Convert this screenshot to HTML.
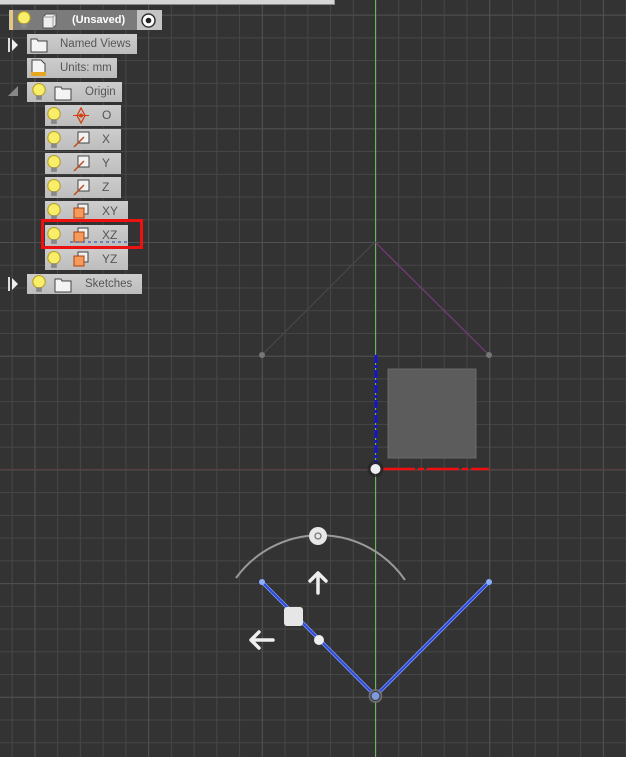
<!DOCTYPE html>
<html><head><meta charset="utf-8"><style>
body{margin:0;width:626px;height:757px;overflow:hidden;background:#333;font-family:"Liberation Sans",sans-serif;position:relative}
svg.bg{position:absolute;left:0;top:0}
.it{position:absolute;height:21px;background:linear-gradient(#cdcdcd,#bdbdbd);font-size:11.5px;color:#555;line-height:21px}
.it .t{position:absolute;top:0}
.bulb{position:absolute;top:2px;width:18px;height:18px}
.ic{position:absolute;top:2px;width:18px;height:17px}
.exp{position:absolute}
</style></head><body>
<svg class="bg" width="626" height="757" xmlns="http://www.w3.org/2000/svg">
<defs>
<pattern id="g" x="11.66" y="14.6" width="22.74" height="22.74" patternUnits="userSpaceOnUse">
<path d="M0.5 0V22.74M0 0.5H22.74" stroke="#464646" stroke-width="1"/>
</pattern>
<pattern id="G" x="34.4" y="14.6" width="113.7" height="113.7" patternUnits="userSpaceOnUse">
<path d="M0.5 0V113.7M0 0.5H113.7" stroke="#505050" stroke-width="1"/>
</pattern>
</defs>
<rect width="626" height="757" fill="#333"/>
<rect width="626" height="757" fill="url(#g)"/>
<rect width="626" height="757" fill="url(#G)"/>
<line x1="0" y1="469.5" x2="626" y2="469.5" stroke="#5a4040" stroke-width="1"/>
<line x1="375.5" y1="0" x2="375.5" y2="757" stroke="#66bb55" stroke-width="1"/>
<line x1="375" y1="242" x2="262" y2="355" stroke="#4a4a4a" stroke-width="1"/>
<line x1="375" y1="242" x2="489" y2="355" stroke="#7b3a7d" stroke-width="1.2"/>
<circle cx="262" cy="355" r="3" fill="#777"/>
<circle cx="489" cy="355" r="3" fill="#777"/>
<rect x="388" y="369" width="88" height="89" fill="#5c5c5c" stroke="#6a6a6a"/>
<line x1="376" y1="355" x2="376" y2="465" stroke="#1010ee" stroke-width="2.5" stroke-dasharray="8,2,3,2"/>
<line x1="383" y1="469" x2="489" y2="469" stroke="#ee1010" stroke-width="2.5" stroke-dasharray="32,3,6,3"/>
<circle cx="375.5" cy="469" r="8" fill="#222" opacity=".7"/>
<circle cx="375.5" cy="469" r="5" fill="#eee"/>
<path d="M236 578 A103.5 103.5 0 0 1 405 580" fill="none" stroke="#9a9a9a" stroke-width="2"/>
<path d="M262 582L375.5 696L489 582" fill="none" stroke="#8aa0ff" stroke-width="3.5"/>
<path d="M262 582L375.5 696L489 582" fill="none" stroke="#2a4ad8" stroke-width="2"/>
<circle cx="262" cy="582" r="3" fill="#8ab0ff"/>
<circle cx="489" cy="582" r="3" fill="#8ab0ff"/>
<circle cx="375.5" cy="696" r="7" fill="#777" opacity=".8"/>
<circle cx="375.5" cy="696" r="4.5" fill="#7d9ae0" stroke="#333" stroke-width="1"/>
<circle cx="318" cy="536" r="9" fill="#e8e8e8"/>
<circle cx="318" cy="536" r="3" fill="none" stroke="#777" stroke-width="1.3"/>
<path d="M318 593V573M310 581L318 573L326 581" fill="none" stroke="#eee" stroke-width="3.5" stroke-linecap="round" stroke-linejoin="round"/>
<path d="M273 640H251M259 632L251 640L259 648" fill="none" stroke="#eee" stroke-width="3.5" stroke-linecap="round" stroke-linejoin="round"/>
<rect x="284" y="607" width="19" height="19" rx="3" fill="#e6e6e6"/>
<circle cx="319" cy="640" r="5" fill="#eee"/>
</svg>

<div style="position:absolute;left:0;top:0;width:334px;height:4px;background:#d6d6d6;border-right:1px solid #999;border-bottom:1px solid #888"></div>

<svg width="0" height="0" style="position:absolute"><defs>
<g id="bulb"><circle cx="8" cy="6" r="5.5" fill="#f8ee6a" stroke="#b8a020" stroke-width="1"/><rect x="5.5" y="11" width="5" height="4" fill="#888"/></g>
<g id="fold"><path d="M1 3H7L8 5H17V16H1Z" fill="#f4f4f4" stroke="#444"/></g>
<g id="ax"><rect x="6" y="1" width="11" height="11" fill="#f2f2f2" stroke="#444"/><line x1="2" y1="16" x2="12" y2="6" stroke="#c04a20" stroke-width="1.5"/></g>
<g id="pl"><rect x="6" y="1" width="10" height="10" fill="#f0f0f0" stroke="#444"/><rect x="2" y="5" width="10" height="10" fill="#f59a5a" stroke="#b04010"/></g>
</defs></svg>

<div class="it" style="left:9px;top:10px;width:153px;height:20px;background:#c4c4c4">
 <div style="position:absolute;left:1px;top:0;width:3px;height:20px;background:#e8c878"></div>
 <div style="position:absolute;left:4px;top:0;width:124px;height:20px;background:#7b7b7b"></div>
 <svg class="bulb" style="left:6px;top:1px" viewBox="0 0 16 16"><use href="#bulb"/></svg>
 <svg style="position:absolute;left:32px;top:2px" width="17" height="17"><path d="M2 5L5 2H15V13L12 16H2Z" fill="#eee" stroke="#555"/><path d="M2 5H12V16M12 5L15 2" fill="none" stroke="#999"/></svg>
 <span class="t" style="left:63px;color:#fff;font-weight:bold;font-size:11px;line-height:20px">(Unsaved)</span>
 <svg style="position:absolute;left:132px;top:3px" width="15" height="15"><circle cx="7.5" cy="7.5" r="6.5" fill="#fff" stroke="#333" stroke-width="1.5"/><circle cx="7.5" cy="7.5" r="2.8" fill="#222"/></svg>
</div>

<svg class="exp" style="left:8px;top:38px" width="10" height="14"><rect x="0" y="0" width="2" height="14" fill="#ddd"/><path d="M4 1L10 7L4 13Z" fill="#eee"/></svg>
<div class="it" style="left:27px;top:34px;width:110px;height:20px"><svg class="ic" style="left:3px" viewBox="0 0 18 17"><use href="#fold"/></svg><span class="t" style="left:33px;line-height:20px">Named Views</span></div>

<div class="it" style="left:27px;top:58px;width:90px;height:20px"><svg class="ic" style="left:3px;top:1px" viewBox="0 0 18 17"><path d="M2 1H11L15 5V14H2Z" fill="#f4f4f4" stroke="#444"/><rect x="1" y="13" width="15" height="4" fill="#e8a520"/></svg><span class="t" style="left:33px;line-height:20px">Units: mm</span></div>

<svg class="exp" style="left:8px;top:86px" width="11" height="11"><path d="M10 0V10H0Z" fill="#888"/></svg>
<div class="it" style="left:27px;top:82px;width:95px;height:20px"><svg class="bulb" style="left:3px;top:1px" viewBox="0 0 16 16"><use href="#bulb"/></svg><svg class="ic" style="left:27px" viewBox="0 0 18 17"><use href="#fold"/></svg><span class="t" style="left:58px;line-height:20px">Origin</span></div>

<div class="it" style="left:45px;top:105px;width:76px"><svg class="bulb" viewBox="0 0 16 16"><use href="#bulb"/></svg><svg class="ic" style="left:27px" viewBox="0 0 18 17"><path d="M9 1L13 8.5L9 16L5 8.5Z" fill="none" stroke="#d04010" stroke-width="1.3"/><path d="M1 8.5H17" stroke="#d04010"/><circle cx="9" cy="8.5" r="2" fill="#d04010"/></svg><span class="t" style="left:57px;font-size:12px">O</span></div>
<div class="it" style="left:45px;top:129px;width:76px"><svg class="bulb" viewBox="0 0 16 16"><use href="#bulb"/></svg><svg class="ic" style="left:27px" viewBox="0 0 18 17"><use href="#ax"/></svg><span class="t" style="left:57px;font-size:12px">X</span></div>
<div class="it" style="left:45px;top:153px;width:76px"><svg class="bulb" viewBox="0 0 16 16"><use href="#bulb"/></svg><svg class="ic" style="left:27px" viewBox="0 0 18 17"><use href="#ax"/></svg><span class="t" style="left:57px;font-size:12px">Y</span></div>
<div class="it" style="left:45px;top:177px;width:76px"><svg class="bulb" viewBox="0 0 16 16"><use href="#bulb"/></svg><svg class="ic" style="left:27px" viewBox="0 0 18 17"><use href="#ax"/></svg><span class="t" style="left:57px;font-size:12px">Z</span></div>
<div class="it" style="left:45px;top:201px;width:83px"><svg class="bulb" viewBox="0 0 16 16"><use href="#bulb"/></svg><svg class="ic" style="left:27px" viewBox="0 0 18 17"><use href="#pl"/></svg><span class="t" style="left:57px;font-size:12px">XY</span></div>
<div class="it" style="left:45px;top:225px;width:83px"><svg class="bulb" viewBox="0 0 16 16"><use href="#bulb"/></svg><svg class="ic" style="left:27px" viewBox="0 0 18 17"><use href="#pl"/></svg><span class="t" style="left:57px;font-size:12px">XZ</span><div style="position:absolute;left:25px;top:16px;width:58px;height:2px;background:repeating-linear-gradient(90deg,#6a80b0 0 3px,transparent 3px 6px)"></div></div>
<div class="it" style="left:45px;top:249px;width:83px"><svg class="bulb" viewBox="0 0 16 16"><use href="#bulb"/></svg><svg class="ic" style="left:27px" viewBox="0 0 18 17"><use href="#pl"/></svg><span class="t" style="left:57px;font-size:12px">YZ</span></div>

<div style="position:absolute;left:41px;top:219px;width:96px;height:24px;border:3px solid #ee1111"></div>

<svg class="exp" style="left:8px;top:277px" width="10" height="14"><rect x="0" y="0" width="2" height="14" fill="#ddd"/><path d="M4 1L10 7L4 13Z" fill="#eee"/></svg>
<div class="it" style="left:27px;top:274px;width:115px;height:20px"><svg class="bulb" style="left:3px;top:1px" viewBox="0 0 16 16"><use href="#bulb"/></svg><svg class="ic" style="left:27px" viewBox="0 0 18 17"><use href="#fold"/></svg><span class="t" style="left:58px;line-height:20px">Sketches</span></div>
</body></html>
